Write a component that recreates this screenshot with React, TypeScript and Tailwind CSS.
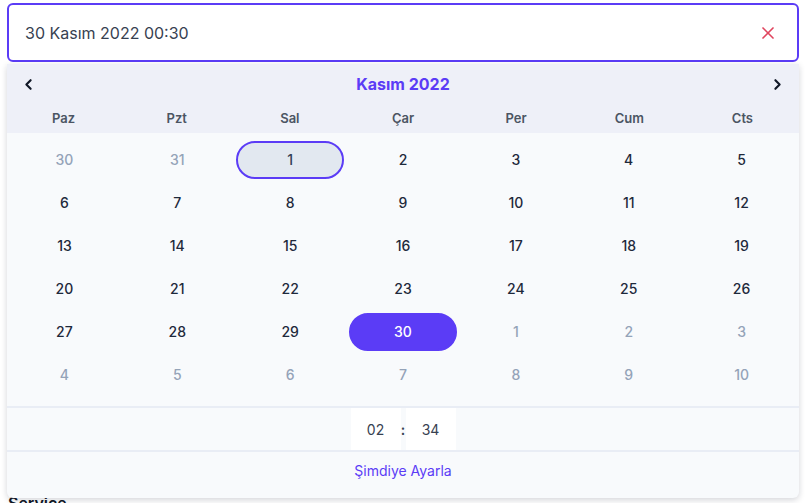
import { ChevronLeft, ChevronRight, X } from "lucide-react";

const dayNames = ["Paz", "Pzt", "Sal", "Çar", "Per", "Cum", "Cts"];

type Day = { n: number; muted?: boolean };

const weeks: Day[][] = [
  [{ n: 30, muted: true }, { n: 31, muted: true }, { n: 1 }, { n: 2 }, { n: 3 }, { n: 4 }, { n: 5 }],
  [{ n: 6 }, { n: 7 }, { n: 8 }, { n: 9 }, { n: 10 }, { n: 11 }, { n: 12 }],
  [{ n: 13 }, { n: 14 }, { n: 15 }, { n: 16 }, { n: 17 }, { n: 18 }, { n: 19 }],
  [{ n: 20 }, { n: 21 }, { n: 22 }, { n: 23 }, { n: 24 }, { n: 25 }, { n: 26 }],
  [{ n: 27 }, { n: 28 }, { n: 29 }, { n: 30 }, { n: 1, muted: true }, { n: 2, muted: true }, { n: 3, muted: true }],
  [
    { n: 4, muted: true },
    { n: 5, muted: true },
    { n: 6, muted: true },
    { n: 7, muted: true },
    { n: 8, muted: true },
    { n: 9, muted: true },
    { n: 10, muted: true },
  ],
];

function DayCell({ day, w, d }: { day: Day; w: number; d: number }) {
  const isToday = w === 0 && d === 2;
  const isSelected = w === 4 && d === 3;

  let cls = "text-[#1e293b] border-transparent";
  if (day.muted) cls = "text-[#94a3b8] border-transparent";
  if (isToday) cls = "bg-[#e2e8f0] border-[#5b3cf6] text-[#334155]";
  if (isSelected) cls = "bg-[#5b3cf6] border-[#5b3cf6] text-white";

  return (
    <div className="h-[43px] px-[2.5px] py-[2.5px]">
      <div
        className={`h-full w-full flex items-center justify-center rounded-full border-2 text-[14px] font-medium ${cls}`}
      >
        {day.n}
      </div>
    </div>
  );
}

export default function App() {
  return (
    <div
      className="relative w-[806px] h-[503px] overflow-hidden bg-white"
      style={{ fontFamily: "Inter, 'Noto Sans', sans-serif" }}
    >
      <div className="px-[7px] pt-[3px]">
        {/* Input */}
        <div className="h-[59px] border-2 border-[#5b3cf6] rounded-md flex items-center justify-between pl-[16px] pr-[19px] bg-white">
          <span className="text-[16px] text-[#374151]">30 Kasım 2022 00:30</span>
          <X className="w-[20px] h-[20px] text-[#e0455e]" strokeWidth={2} />
        </div>

        {/* Content behind the popover */}
        <div className="pt-[431px] pl-px text-[16px] leading-[20px] font-semibold text-[#111827]">Service</div>
      </div>

      {/* Popover */}
      <div className="absolute left-[7px] top-[64px] w-[792px] rounded-b-md bg-[#f8fafc] shadow-[0_2px_6px_rgba(15,23,42,0.18)] overflow-hidden">
        {/* Header */}
        <div className="bg-[#eef0f8] h-[69px]">
          <div className="flex items-center justify-between h-[40px] px-[13px]">
            <ChevronLeft className="w-[17px] h-[17px] text-[#111827]" strokeWidth={3} />
            <span className="text-[16px] font-bold text-[#5b3cf6]">Kasım 2022</span>
            <ChevronRight className="w-[17px] h-[17px] text-[#111827]" strokeWidth={3} />
          </div>
          <div className="grid grid-cols-7 h-[29px] items-center">
            {dayNames.map((d) => (
              <div key={d} className="text-center text-[13px] font-semibold text-[#4b5563]">
                {d}
              </div>
            ))}
          </div>
        </div>

        {/* Days */}
        <div className="px-px pt-[5px] pb-[10px]">
          {weeks.map((week, w) => (
            <div key={w} className="grid grid-cols-7">
              {week.map((day, d) => (
                <DayCell key={d} day={day} w={w} d={d} />
              ))}
            </div>
          ))}
        </div>

        {/* Time */}
        <div className="border-t-2 border-b-2 border-[#e9edf5] h-[46px] flex items-center justify-center">
          <div className="w-[50px] h-[42px] bg-white flex items-center justify-center text-[14px] text-[#374151]">
            02
          </div>
          <span className="w-[5px] text-center text-[14px] font-semibold text-[#374151]">:</span>
          <div className="w-[50px] h-[42px] bg-white flex items-center justify-center text-[14px] text-[#374151]">
            34
          </div>
        </div>

        {/* Footer */}
        <div className="h-[46px] pt-[9px] flex justify-center">
          <span className="text-[14px] leading-[20px] text-[#5b3cf6]">Şimdiye Ayarla</span>
        </div>
      </div>
    </div>
  );
}
